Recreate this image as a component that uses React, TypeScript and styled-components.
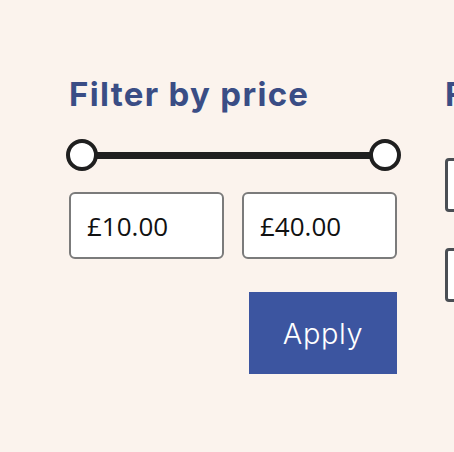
import React from 'react';
import styled, { createGlobalStyle } from 'styled-components';

const GlobalStyle = createGlobalStyle`
  * { box-sizing: border-box; }
  html, body {
    margin: 0;
    background: #fbf3ed;
    overflow: hidden;
  }
`;

const Page = styled.div`
  width: 454px;
  height: 452px;
  display: flex;
  gap: 48px;
  padding: 74px 0 0 69px;
  overflow: hidden;
`;

const Panel = styled.section`
  width: 328px;
  flex-shrink: 0;
  display: flex;
  flex-direction: column;
`;

const Heading = styled.h2`
  margin: 0;
  font-family: Inter, "Liberation Sans", sans-serif;
  font-weight: 700;
  font-size: 33px;
  line-height: 40px;
  letter-spacing: 1.3px;
  color: #3a4d85;
  white-space: nowrap;
`;

const Slider = styled.div`
  position: relative;
  height: 32px;
  margin: 25px -4px 0 -3px;
  display: flex;
  align-items: center;
`;

const Track = styled.div`
  flex: 1;
  height: 7px;
  margin: 0 15px;
  background: #1f1f1f;
`;

const Knob = styled.div<{ $side: 'left' | 'right' }>`
  position: absolute;
  top: 0;
  ${(p) => (p.$side === 'left' ? 'left: 0;' : 'right: 0;')}
  width: 32px;
  height: 32px;
  border-radius: 50%;
  background: #fff;
  border: 4px solid #1f1f1f;
`;

const Inputs = styled.div`
  display: flex;
  gap: 18px;
  margin-top: 21px;
`;

const PriceInput = styled.input`
  width: 155px;
  height: 67px;
  padding: 0 16px;
  border: 2px solid #7b7b7b;
  border-radius: 6px;
  background: #fff;
  font-family: "Open Sans", "Noto Sans", sans-serif;
  font-size: 26px;
  color: #111;
  outline: none;
`;

const Actions = styled.div`
  display: flex;
  justify-content: flex-end;
  margin-top: 33px;
`;

const ApplyButton = styled.button`
  width: 148px;
  height: 82px;
  border: none;
  background: #3c55a0;
  color: #fff;
  font-family: Inter, "Liberation Sans", sans-serif;
  font-weight: 300;
  font-size: 29px;
  letter-spacing: 0.6px;
  cursor: pointer;
`;

const SidePanel = styled.section`
  flex-shrink: 0;
  display: flex;
  flex-direction: column;
`;

const Options = styled.div`
  display: flex;
  flex-direction: column;
  gap: 36px;
  margin-top: 44px;
`;

const Checkbox = styled.span`
  display: block;
  width: 54px;
  height: 54px;
  border: 3px solid #4a4e54;
  border-radius: 4px;
  background: #fff;
`;

export default function App() {
  return (
    <>
      <GlobalStyle />
      <Page>
        <Panel>
          <Heading>Filter by price</Heading>
          <Slider>
            <Track />
            <Knob $side="left" />
            <Knob $side="right" />
          </Slider>
          <Inputs>
            <PriceInput defaultValue="£10.00" aria-label="Minimum price" />
            <PriceInput defaultValue="£40.00" aria-label="Maximum price" />
          </Inputs>
          <Actions>
            <ApplyButton>Apply</ApplyButton>
          </Actions>
        </Panel>
        <SidePanel>
          <Heading>Filter by category</Heading>
          <Options>
            <Checkbox />
            <Checkbox />
          </Options>
        </SidePanel>
      </Page>
    </>
  );
}
